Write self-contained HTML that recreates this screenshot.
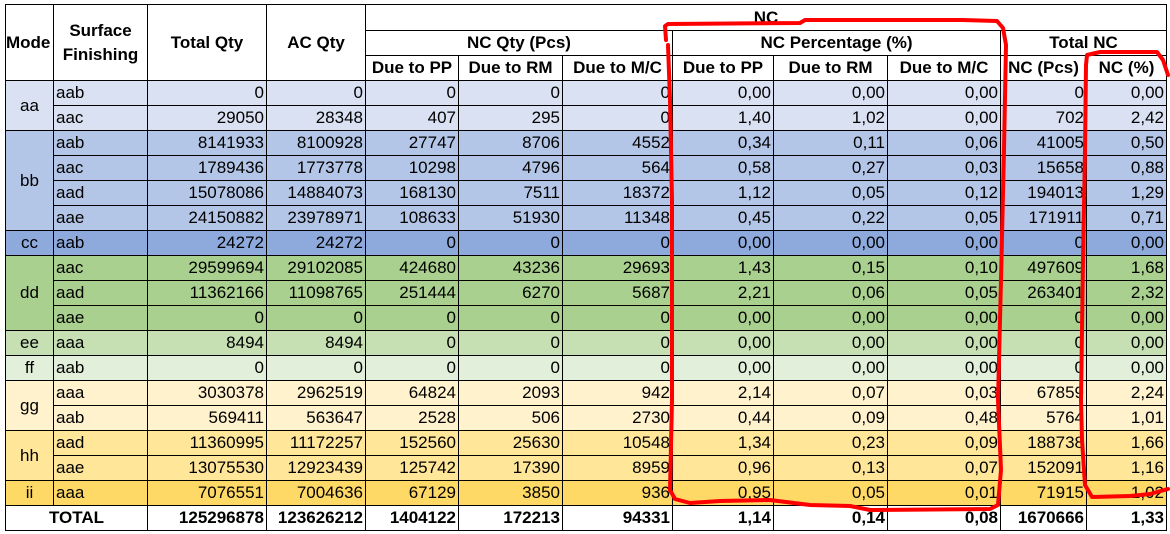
<!DOCTYPE html>
<html><head><meta charset="utf-8"><style>
html,body{margin:0;padding:0;background:#fff;width:1170px;height:534px;overflow:hidden;position:relative}
table{position:absolute;left:5px;top:4px;border-collapse:collapse;table-layout:fixed;font-family:"Liberation Sans",sans-serif;font-size:17px;color:#000}
td,th{border:1px solid #000;padding:0 2px;height:24px;white-space:nowrap;overflow:hidden;line-height:24px}
th{font-weight:bold;font-size:17px;text-align:center;background:#fff}
td{text-align:right}
td.m{text-align:center}
td.s{text-align:left}
.a td{background:#D9E1F2}.b td{background:#B4C6E7}.c td{background:#8EA9DB}.d td{background:#A9D08E}.e td{background:#C6E0B4}.f td{background:#E2EFDA}.g td{background:#FFF2CC}.h td{background:#FFE699}.i td{background:#FFD966}
tr.t td{background:#fff;font-weight:bold}
svg{position:absolute;left:0;top:0}
</style></head><body>
<table>
<colgroup><col style="width:48px"><col style="width:94px"><col style="width:119px"><col style="width:99px"><col style="width:93px"><col style="width:104px"><col style="width:110px"><col style="width:101px"><col style="width:114px"><col style="width:113px"><col style="width:86px"><col style="width:80px"></colgroup>
<tr style="height:26px"><th rowspan="3" style="padding:0;text-align:left">Mode</th><th rowspan="3" style="line-height:24px">Surface<br>Finishing</th><th rowspan="3">Total Qty</th><th rowspan="3">AC Qty</th><th colspan="8" style="height:25px;line-height:25px">NC</th></tr>
<tr><th colspan="3">NC Qty (Pcs)</th><th colspan="3">NC Percentage (%)</th><th colspan="2">Total NC</th></tr>
<tr><th>Due to PP</th><th>Due to RM</th><th>Due to M/C</th><th>Due to PP</th><th>Due to RM</th><th>Due to M/C</th><th>NC (Pcs)</th><th>NC (%)</th></tr>
<tr class="a"><td class="m" rowspan="2">aa</td><td class="s">aab</td><td>0</td><td>0</td><td>0</td><td>0</td><td>0</td><td>0,00</td><td>0,00</td><td>0,00</td><td>0</td><td>0,00</td></tr>
<tr class="a"><td class="s">aac</td><td>29050</td><td>28348</td><td>407</td><td>295</td><td>0</td><td>1,40</td><td>1,02</td><td>0,00</td><td>702</td><td>2,42</td></tr>
<tr class="b"><td class="m" rowspan="4">bb</td><td class="s">aab</td><td>8141933</td><td>8100928</td><td>27747</td><td>8706</td><td>4552</td><td>0,34</td><td>0,11</td><td>0,06</td><td>41005</td><td>0,50</td></tr>
<tr class="b"><td class="s">aac</td><td>1789436</td><td>1773778</td><td>10298</td><td>4796</td><td>564</td><td>0,58</td><td>0,27</td><td>0,03</td><td>15658</td><td>0,88</td></tr>
<tr class="b"><td class="s">aad</td><td>15078086</td><td>14884073</td><td>168130</td><td>7511</td><td>18372</td><td>1,12</td><td>0,05</td><td>0,12</td><td>194013</td><td>1,29</td></tr>
<tr class="b"><td class="s">aae</td><td>24150882</td><td>23978971</td><td>108633</td><td>51930</td><td>11348</td><td>0,45</td><td>0,22</td><td>0,05</td><td>171911</td><td>0,71</td></tr>
<tr class="c"><td class="m">cc</td><td class="s">aab</td><td>24272</td><td>24272</td><td>0</td><td>0</td><td>0</td><td>0,00</td><td>0,00</td><td>0,00</td><td>0</td><td>0,00</td></tr>
<tr class="d"><td class="m" rowspan="3">dd</td><td class="s">aac</td><td>29599694</td><td>29102085</td><td>424680</td><td>43236</td><td>29693</td><td>1,43</td><td>0,15</td><td>0,10</td><td>497609</td><td>1,68</td></tr>
<tr class="d"><td class="s">aad</td><td>11362166</td><td>11098765</td><td>251444</td><td>6270</td><td>5687</td><td>2,21</td><td>0,06</td><td>0,05</td><td>263401</td><td>2,32</td></tr>
<tr class="d"><td class="s">aae</td><td>0</td><td>0</td><td>0</td><td>0</td><td>0</td><td>0,00</td><td>0,00</td><td>0,00</td><td>0</td><td>0,00</td></tr>
<tr class="e"><td class="m">ee</td><td class="s">aaa</td><td>8494</td><td>8494</td><td>0</td><td>0</td><td>0</td><td>0,00</td><td>0,00</td><td>0,00</td><td>0</td><td>0,00</td></tr>
<tr class="f"><td class="m">ff</td><td class="s">aab</td><td>0</td><td>0</td><td>0</td><td>0</td><td>0</td><td>0,00</td><td>0,00</td><td>0,00</td><td>0</td><td>0,00</td></tr>
<tr class="g"><td class="m" rowspan="2">gg</td><td class="s">aaa</td><td>3030378</td><td>2962519</td><td>64824</td><td>2093</td><td>942</td><td>2,14</td><td>0,07</td><td>0,03</td><td>67859</td><td>2,24</td></tr>
<tr class="g"><td class="s">aab</td><td>569411</td><td>563647</td><td>2528</td><td>506</td><td>2730</td><td>0,44</td><td>0,09</td><td>0,48</td><td>5764</td><td>1,01</td></tr>
<tr class="h"><td class="m" rowspan="2">hh</td><td class="s">aad</td><td>11360995</td><td>11172257</td><td>152560</td><td>25630</td><td>10548</td><td>1,34</td><td>0,23</td><td>0,09</td><td>188738</td><td>1,66</td></tr>
<tr class="h"><td class="s">aae</td><td>13075530</td><td>12923439</td><td>125742</td><td>17390</td><td>8959</td><td>0,96</td><td>0,13</td><td>0,07</td><td>152091</td><td>1,16</td></tr>
<tr class="i"><td class="m">ii</td><td class="s">aaa</td><td>7076551</td><td>7004636</td><td>67129</td><td>3850</td><td>936</td><td>0,95</td><td>0,05</td><td>0,01</td><td>71915</td><td>1,02</td></tr>
<tr class="t"><td class="m" colspan="2">TOTAL</td><td>125296878</td><td>123626212</td><td>1404122</td><td>172213</td><td>94331</td><td>1,14</td><td>0,14</td><td>0,08</td><td>1670666</td><td>1,33</td></tr>
</table>
<svg width="1170" height="534" viewBox="0 0 1170 534" fill="none" stroke="#f00" stroke-width="4" stroke-linecap="round" stroke-linejoin="round">
<path d="M666,40 L665,26 L668,24 L800,23 L805,20 L962,20 L997,21 L1003,28 L1006,45 L1004,150 L1001,280 L998,400 L1001,470 L998,505 L990,509 L870,510 L850,506 L810,505 L770,500 L720,501 L690,503 L675,499 L670,490 L672,400 L672,300 L672,200 L670,100 L668,45"/>
<path d="M1086,65 L1087,55 L1100,52 L1157,52 L1163,60 L1168,75"/>
<path d="M1086,65 L1085,150 L1083,260 L1081,400 L1082,440 L1085,485 L1092,497 L1130,496 L1150,494 L1168,489"/>
</svg>
</body></html>
